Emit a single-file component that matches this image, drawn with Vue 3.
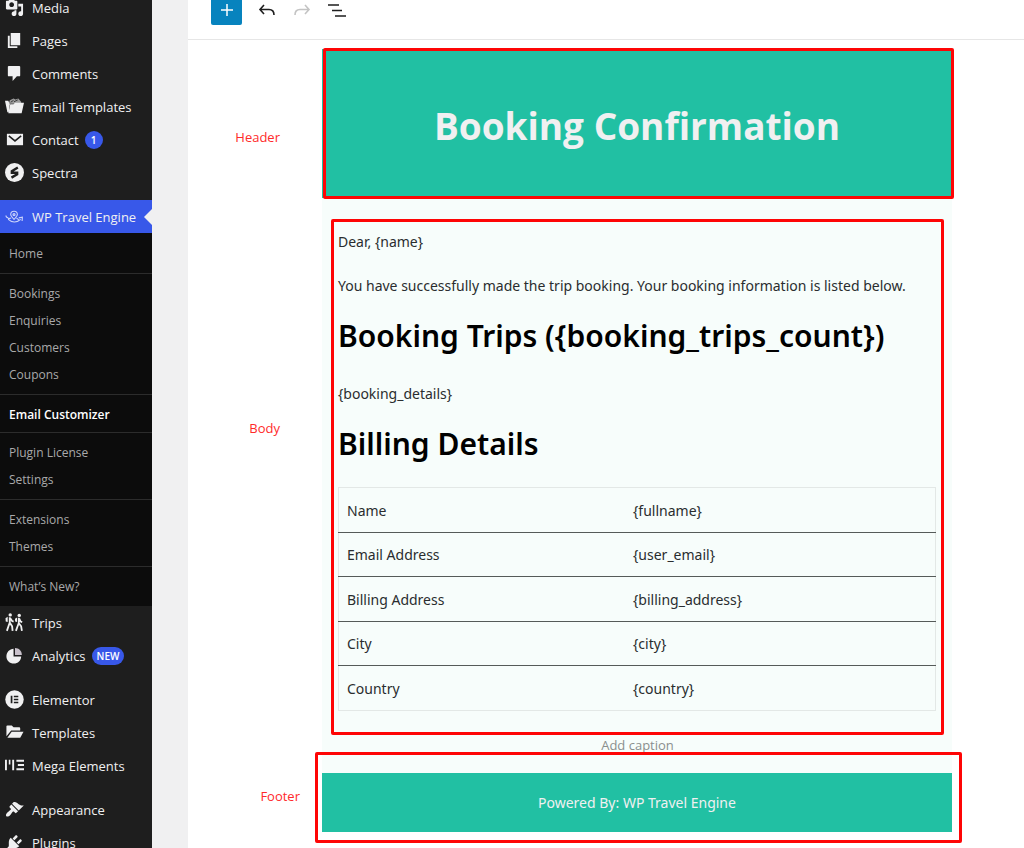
<script setup>
const icons = {
  media: '<path d="M13 11V4c0-.55-.45-1-1-1h-1.67L9 1H5L3.67 3H2c-.55 0-1 .45-1 1v7c0 .55.45 1 1 1h10c.55 0 1-.45 1-1zM7 4.5c1.38 0 2.5 1.12 2.5 2.5S8.38 9.5 7 9.5 4.5 8.38 4.5 7 5.62 4.5 7 4.5zM14 6h5v10.5c0 1.38-1.12 2.5-2.5 2.5S14 17.88 14 16.5s1.12-2.5 2.5-2.5c.17 0 .34.02.5.05V9h-3V6zm-4 8.05V13h2v3.5c0 1.38-1.12 2.5-2.5 2.5S7 17.88 7 16.5 8.12 14 9.5 14c.17 0 .34.02.5.05z"/>',
  pages: '<path d="M6 15V2h10v13H6zm-1 1h8v2H3V5h2v11z"/>',
  comments: '<path d="M4 2h11c.6 0 1 .4 1 1v9c0 .6-.4 1-1 1h-2.500l-4.500 5v-5H4c-.6 0-1-.4-1-1V3c0-.6.4-1 1-1z"/>',
  folders: '<path d="M4 7 5 3.500l4-2 2 1 3-1 3 3.500v2z" fill="#9c9c9c"/><path d="M0 4h3.500L5 7.500 4 16H2.500z"/><path d="M5.500 7.500H9L10.500 6H20l-2.500 11H3.500z"/><path d="M6 5.500l3-2M9.500 5l4-2" stroke="#3a3a3a" fill="none"/>',
  email: '<path d="M2 4h17v12H2z"/><path d="M4 6.200l6.500 5.300L17 6.200" fill="none" stroke="#1e1e1e" stroke-width="1.600"/>',
  spectra: '<circle cx="10" cy="10" r="10"/><path d="M13.500 4.800 7.200 8.600v1.600h5.600v1.600l-6 3.600" fill="none" stroke="#1e1e1e" stroke-width="2.500"/>',
  travel: '<g fill="none" stroke="#c9d2fa" stroke-width="1.200"><path d="M9.500 13C7.500 11 6 9.500 6 8a3.500 3.500 0 0 1 7 0C13 9.500 11.500 11 9.500 13z"/><circle cx="9.500" cy="8" r="1.100"/><path d="M1 9c0 1.600 1.200 2.200 2.500 2.400M3.500 13c3.500 3.500 9 3.800 13 0M14.500 11.500l3.800-.8-.3 4M6.500 11.500 3 12.500M12 11.500l2.500 2"/></g>',
  trips: '<circle cx="5.500" cy="2" r="1.800"/><circle cx="15" cy="2.500" r="1.800"/><path d="M.5 5.500 2.800 4v5.500L.8 9z"/><path d="M10.500 6 12.700 4.700v4.800l-2-.5z"/><path d="M5 4.500v6.500M5 10 2 18.800M5.300 10.500l2.200 3.500.5 4.800M5.500 5.500l2 3 1.600.6M14.500 5v6.500M14.500 10.500l-3 8.300M14.800 11l2.200 3 .8 4.800M15 6l1.500 3 1.600.5" fill="none" stroke="currentColor" stroke-width="1.900"/>',
  analytics: '<path d="M9 3v8h8c0 4.200-3.400 7.500-7.700 7.500S1.500 15.100 1.500 11 4.800 3 9 3z"/><path d="M10.500 2.200v7.200h7.200c0-4.200-3-7.200-7.200-7.200z" fill="#c9c1cb"/>',
  elementor: '<circle cx="10" cy="10" r="9.700"/><path d="M6 6h1.800v8H6zM9.300 6H14v1.600H9.300zM9.300 9.200H14v1.600H9.300zM9.300 12.400H14V14H9.300z" fill="#1e1e1e"/>',
  templates: '<path d="M1.500 14V3.500c0-.6.4-1 1-1h4.600L9 4.500h6c.6 0 1 .4 1 1V8H6.500z"/><path d="M7 9.300h12.500L16 15.500H2.500z"/>',
  mega: '<path d="M0 4h2v11H0zM4 4h1.700v5H4zM7.600 4h2v11h-2zM12 4h8v2h-8zM13.500 8.500h6.500v2h-6.500zM12 13h8v2h-8z"/>',
  appearance: '<path d="M14.480 11.060L7.410 3.990l1.500-1.500c.5-.56 2.300-.47 3.510.32 1.210.8 1.430 1.280 2.910 2.100 1.180.64 2.450 1.260 4.450.85zm-.71.71L6.700 4.700 4.930 6.470c-.39.39-.39 1.020 0 1.410l1.060 1.060c.39.39.39 1.030 0 1.420-.6.6-1.430 1.110-2.210 1.690-.35.26-.7.53-1.010.84C1.430 14.230.4 16.080 1.400 17.070c.99 1 2.840-.03 4.180-1.360.31-.31.58-.66.85-1.020.57-.78 1.080-1.610 1.690-2.210.39-.39 1.020-.39 1.410 0l1.060 1.060c.39.39 1.020.39 1.410 0z"/>',
  plugins: '<path d="M13.110 4.360L9.870 7.600 8 5.730l3.240-3.240c.35-.34 1.050-.2 1.560.32.52.51.66 1.210.31 1.550zm-8 1.770l.91-1.120 9.010 9.010-1.190.84c-.71.71-2.630 1.160-3.820 1.160H6.140L4.900 17.260c-.59.59-1.540.59-2.120 0-.59-.58-.59-1.530 0-2.120l1.240-1.240v-3.880c0-1.130.4-3.190 1.090-3.890zm7.260 3.970l3.240-3.240c.34-.35 1.040-.21 1.550.31.52.51.66 1.210.31 1.550l-3.240 3.250z"/>',
}

const topMenu = [
  { label: 'Media', icon: 'media' },
  { label: 'Pages', icon: 'pages' },
  { label: 'Comments', icon: 'comments' },
  { label: 'Email Templates', icon: 'folders' },
  { label: 'Contact', icon: 'email', badge: '1' },
  { label: 'Spectra', icon: 'spectra' },
  { label: 'WP Travel Engine', icon: 'travel', gap: true, active: true },
]

const submenu = [
  ['Home'],
  ['Bookings', 'Enquiries', 'Customers', 'Coupons'],
  ['Email Customizer'],
  ['Plugin License', 'Settings'],
  ['Extensions', 'Themes'],
  ['What’s New?'],
]

const bottomMenu = [
  { label: 'Trips', icon: 'trips' },
  { label: 'Analytics', icon: 'analytics', badge: 'NEW' },
  { label: 'Elementor', icon: 'elementor', gap: true },
  { label: 'Templates', icon: 'templates' },
  { label: 'Mega Elements', icon: 'mega' },
  { label: 'Appearance', icon: 'appearance', gap: true },
  { label: 'Plugins', icon: 'plugins' },
]

const rows = [
  ['Name', '{fullname}'],
  ['Email Address', '{user_email}'],
  ['Billing Address', '{billing_address}'],
  ['City', '{city}'],
  ['Country', '{country}'],
]

const heading = 'Booking Trips ({booking_trips_count})'
</script>

<template>
  <div class="admin">
    <nav class="sidebar" aria-label="Main menu">
      <a v-for="m in topMenu" :key="m.label" href="#" class="item" :class="{ gap: m.gap, active: m.active }">
        <svg class="icon" viewBox="0 0 20 20" aria-hidden="true" v-html="icons[m.icon]"></svg>
        <span>{{ m.label }}</span>
        <span v-if="m.badge" class="badge">{{ m.badge }}</span>
      </a>
      <div class="submenu">
        <div v-for="(group, i) in submenu" :key="i" class="group" :class="{ current: i === 2 }">
          <a v-for="s in group" :key="s" href="#">{{ s }}</a>
        </div>
      </div>
      <a v-for="m in bottomMenu" :key="m.label" href="#" class="item" :class="{ gap: m.gap }">
        <svg class="icon" viewBox="0 0 20 20" aria-hidden="true" v-html="icons[m.icon]"></svg>
        <span>{{ m.label }}</span>
        <span v-if="m.badge" class="badge">{{ m.badge }}</span>
      </a>
    </nav>

    <main class="editor">
      <header class="toolbar">
        <button class="add" type="button" aria-label="Add block">
          <svg width="14" height="14" viewBox="0 0 14 14"><path d="M7 1v12M1 7h12" stroke="#fff" stroke-width="1.500" /></svg>
        </button>
        <button class="tool" type="button" aria-label="Undo">
          <svg viewBox="0 0 18 16"><path d="M6 2 2 6.500 6 11M2 6.500h9c3.500 0 5 1.500 5 5.500" /></svg>
        </button>
        <button class="tool" type="button" aria-label="Redo" disabled>
          <svg viewBox="0 0 18 16"><path d="M12 2l4 4.500L12 11M16 6.500H7c-3.500 0-5 1.500-5 5.500" /></svg>
        </button>
        <button class="tool" type="button" aria-label="List view">
          <svg viewBox="0 0 18 16"><path d="M0 2h11M4 7.500h10M7 13h11" /></svg>
        </button>
      </header>

      <div class="canvas">
        <p class="note">Header</p>
        <section class="hero">
          <h1>Booking Confirmation</h1>
        </section>

        <p class="note">Body</p>
        <section class="content">
          <div class="frame">
            <p>Dear, {name}</p>
            <p>You have successfully made the trip booking. Your booking information is listed below.</p>
            <h2>{{ heading }}</h2>
            <p>{booking_details}</p>
            <h2>Billing Details</h2>
            <table>
              <tbody>
                <tr v-for="r in rows" :key="r[0]">
                  <th scope="row">{{ r[0] }}</th>
                  <td>{{ r[1] }}</td>
                </tr>
              </tbody>
            </table>
          </div>
          <div class="caption">Add caption</div>
        </section>

        <p class="note low">Footer</p>
        <footer class="powered">Powered By: WP Travel Engine</footer>
      </div>
    </main>
  </div>
</template>

<style>
body {
  margin: 0;
  background: #f0f0f1;
}
</style>

<style scoped>
.admin {
  display: grid;
  grid-template-columns: 152px 1fr;
  column-gap: 36px;
  height: 100vh;
  overflow: hidden;
  font-family: "Open Sans", "Noto Sans", sans-serif;
  background: #f0f0f1;
}
.sidebar {
  background: #1e1e1e;
  margin-top: -9px;
  color: #f0f0f1;
}
.item {
  display: flex;
  align-items: center;
  height: 33px;
  padding-left: 5px;
  color: inherit;
  text-decoration: none;
  font-size: 13px;
  line-height: 20px;
  white-space: nowrap;
}
.item.gap {
  margin-top: 11px;
}
.icon {
  width: 19px;
  height: 19px;
  margin-right: 8px;
  fill: currentColor;
  flex: none;
}
.active {
  position: relative;
  background: #3858e9;
}
.active::after {
  content: "";
  position: absolute;
  right: 0;
  top: 9px;
  border: 8px solid transparent;
  border-left: 0;
  border-right-color: #f0f0f1;
}
.badge {
  min-width: 8px;
  margin-left: 6px;
  padding: 0 5px;
  border-radius: 9px;
  background: #3858e9;
  color: #fff;
  font-size: 10px;
  font-weight: 600;
  line-height: 18px;
  text-align: center;
}
.submenu {
  padding-top: 1px;
  background: #0c0c0c;
}
.group {
  padding: 6px 0;
}
.group + .group {
  border-top: 1px solid #2c2c2c;
}
.group a {
  display: block;
  padding-left: 9px;
  color: #a9a9aa;
  font-size: 12px;
  line-height: 27px;
  text-decoration: none;
}
.group.current {
  padding-bottom: 4px;
}
.group.current a {
  color: #fff;
  font-weight: 600;
}
.editor {
  background: #fff;
}
.toolbar {
  display: flex;
  align-items: flex-start;
  height: 39px;
  padding-left: 23px;
  border-bottom: 1px solid #e6e6e6;
}
.add {
  display: grid;
  place-items: center;
  width: 31px;
  height: 31px;
  margin: -6px 7px 0 0;
  padding: 0;
  border: 0;
  border-radius: 2px;
  background: #0783be;
}
.tool {
  width: 35px;
  height: 20px;
  padding: 0;
  border: 0;
  background: none;
  color: #1e1e1e;
}
.tool:disabled {
  color: #c4c4c4;
}
.tool svg {
  display: block;
  width: 18px;
  height: 16px;
  margin: 2px auto 0;
  fill: none;
  stroke: currentColor;
  stroke-width: 1.600;
}
.canvas {
  display: grid;
  grid-template-columns: 134px 1fr;
  padding: 9px 72px 0 0;
}
.note {
  align-self: center;
  margin: 0;
  padding: 27px 42px 0 0;
  color: #ff2a2a;
  font-size: 13px;
  line-height: 20px;
  text-align: right;
}
.note:nth-of-type(2) {
  padding: 0 42px 116px 0;
}
.note.low {
  padding: 0 22px 14px 0;
}
.hero,
.powered {
  position: relative;
  display: grid;
  place-items: center;
  background: #21c0a3;
}
.hero {
  height: 149px;
}
.hero::after,
.powered::after {
  content: "";
  position: absolute;
  inset: -1px -2px -1px 1px;
  border: 3px solid #fe0505;
  border-radius: 2px;
}
h1 {
  margin: 0;
  padding-top: 4px;
  color: #f0f0f1;
  font-size: 37px;
  line-height: 50px;
}
.content {
  padding: 21px 8px 18px 9px;
  background: #f7fdfb;
  color: #2a2d2f;
  font-family: "Noto Sans", sans-serif;
  font-size: 14px;
}
.frame {
  padding: 8px 5px 21px 4px;
  border: 3px solid #fe0505;
  border-radius: 2px;
}
.frame p {
  margin: 0 0 18px;
  line-height: 24px;
}
.frame p:first-child {
  margin-bottom: 20px;
}
.frame h2 {
  margin: 0 0 26px;
  color: #000;
  font-size: 30px;
  font-weight: 600;
  line-height: 40px;
}
.frame h2:nth-of-type(2) {
  margin-bottom: 23px;
}
table {
  width: 100%;
  table-layout: fixed;
  border-collapse: collapse;
  border: 1px solid #e3e8e6;
}
th,
td {
  width: 48%;
  height: 44px;
  box-sizing: border-box;
  padding: 0 8px;
  font-weight: 400;
  text-align: left;
}
td {
  width: 52%;
}
tr:nth-child(odd) > * {
  height: 45px;
}
tr + tr {
  border-top: 1px solid #555b59;
}
.caption {
  color: #8a8f8e;
  font-family: "Open Sans", sans-serif;
  font-size: 13px;
  line-height: 20px;
  text-align: center;
}
.powered {
  height: 59px;
  color: #f0f0f1;
  font-family: "Noto Sans", sans-serif;
  font-size: 14px;
}
.powered::after {
  inset: -21px -10px -11px -7px;
}
</style>
